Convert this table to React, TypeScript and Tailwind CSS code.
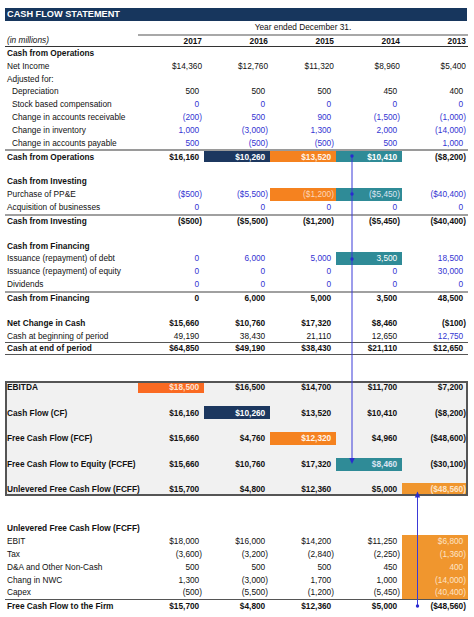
import clsx from "clsx"

type Cell = string | { v: string; bg: string; fg: string }

type Row = {
  label?: string
  values?: Cell[]
  bold?: boolean
  indent?: boolean
  blue?: boolean[]
  raw?: boolean
  line?: string
}

const NAVY = { bg: "bg-[#1c375f]", fg: "text-white" }
const ORANGE = { bg: "bg-[#f5821f]", fg: "text-[#fff3ea]" }
const ORANGE_SOFT = { bg: "bg-[#f5821f]", fg: "text-[#fcd6b8]" }
const TEAL = { bg: "bg-[#2f8b97]", fg: "text-white" }
const TEAL_SOFT = { bg: "bg-[#2f8b97]", fg: "text-[#d9e4f2]" }
const RED_ORANGE = { bg: "bg-[#fa6a22]", fg: "text-[#ffe3d2]" }
const AMBER = { bg: "bg-[#f0962e]", fg: "text-[#fde3c6]" }

const ALL = [true, true, true, true, true]
const LAST = [false, false, false, false, true]

const top: Row[] = [
  { label: "Cash from Operations", bold: true },
  { label: "Net Income", values: ["$14,360", "$12,760", "$11,320", "$8,960", "$5,400"], raw: true },
  { label: "Adjusted for:" },
  { label: "Depreciation", indent: true, values: ["500", "500", "500", "450", "400"] },
  { label: "Stock based compensation", indent: true, blue: ALL, values: ["0", "0", "0", "0", "0"] },
  { label: "Change in accounts receivable", indent: true, blue: ALL, values: ["(200)", "500", "900", "(1,500)", "(1,000)"] },
  { label: "Change in inventory", indent: true, blue: ALL, values: ["1,000", "(3,000)", "1,300", "2,000", "(14,000)"] },
  { label: "Change in accounts payable", indent: true, blue: ALL, values: ["500", "(500)", "(500)", "500", "1,000"] },
  {
    label: "Cash from Operations",
    bold: true,
    line: "border-t-2 border-[#9a9a9a]",
    values: [
      "$16,160",
      { v: "$10,260", ...NAVY },
      { v: "$13,520", ...ORANGE },
      { v: "$10,410", ...TEAL },
      "($8,200)",
    ],
  },
  {},
  { label: "Cash from Investing", bold: true },
  {
    label: "Purchase of PP&E",
    blue: ALL,
    values: ["($500)", "($5,500)", { v: "($1,200)", ...ORANGE_SOFT }, { v: "($5,450)", ...TEAL_SOFT }, "($40,400)"],
  },
  { label: "Acquisition of businesses", blue: ALL, values: ["0", "0", "0", "0", "0"] },
  {
    label: "Cash from Investing",
    bold: true,
    line: "border-t-2 border-[#a0a0a0]",
    values: ["($500)", "($5,500)", "($1,200)", "($5,450)", "($40,400)"],
  },
  {},
  { label: "Cash from Financing", bold: true },
  {
    label: "Issuance (repayment) of debt",
    blue: ALL,
    values: ["0", "6,000", "5,000", { v: "3,500", ...TEAL }, "18,500"],
  },
  { label: "Issuance (repayment) of equity", blue: ALL, values: ["0", "0", "0", "0", "30,000"] },
  { label: "Dividends", blue: ALL, values: ["0", "0", "0", "0", "0"] },
  {
    label: "Cash from Financing",
    bold: true,
    line: "border-t-2 border-[#a0a0a0]",
    values: ["0", "6,000", "5,000", "3,500", "48,500"],
  },
  {},
  { label: "Net Change in Cash", bold: true, values: ["$15,660", "$10,760", "$17,320", "$8,460", "($100)"] },
  { label: "Cash at beginning of period", blue: LAST, values: ["49,190", "38,430", "21,110", "12,650", "12,750"] },
  {
    label: "Cash at end of period",
    bold: true,
    line: "border-y border-[#555]",
    values: ["$64,850", "$49,190", "$38,430", "$21,110", "$12,650"],
  },
  {},
  {},
]

const box: Row[] = [
  { label: "EBITDA", bold: true, values: [{ v: "$18,500", ...RED_ORANGE }, "$16,500", "$14,700", "$11,700", "$7,200"] },
  {},
  { label: "Cash Flow (CF)", bold: true, values: ["$16,160", { v: "$10,260", ...NAVY }, "$13,520", "$10,410", "($8,200)"] },
  {},
  { label: "Free Cash Flow (FCF)", bold: true, values: ["$15,660", "$4,760", { v: "$12,320", ...ORANGE }, "$4,960", "($48,600)"] },
  {},
  {
    label: "Free Cash Flow to Equity (FCFE)",
    bold: true,
    values: ["$15,660", "$10,760", "$17,320", { v: "$8,460", ...TEAL_SOFT }, "($30,100)"],
  },
  {},
  {
    label: "Unlevered Free Cash Flow (FCFF)",
    bold: true,
    line: "pb-[1px]",
    values: ["$15,700", "$4,800", "$12,360", "$5,000", { v: "($48,560)", ...AMBER }],
  },
]

const bottom: Row[] = [
  {},
  {},
  { label: "Unlevered Free Cash Flow (FCFF)", bold: true },
  { label: "EBIT", values: ["$18,000", "$16,000", "$14,200", "$11,250", { v: "$6,800", ...AMBER }] },
  { label: "Tax", values: ["(3,600)", "(3,200)", "(2,840)", "(2,250)", { v: "(1,360)", ...AMBER }] },
  { label: "D&A and Other Non-Cash", values: ["500", "500", "500", "450", { v: "400", ...AMBER }] },
  { label: "Chang in NWC", values: ["1,300", "(3,000)", "1,700", "1,000", { v: "(14,000)", ...AMBER }] },
  { label: "Capex", values: ["(500)", "(5,500)", "(1,200)", "(5,450)", { v: "(40,400)", ...AMBER }] },
  {
    label: "Free Cash Flow to the Firm",
    bold: true,
    line: "border-t border-[#555]",
    values: ["$15,700", "$4,800", "$12,360", "$5,000", "($48,560)"],
  },
]

const GRID = "grid grid-cols-[133px_66px_66px_66px_66px_66px] h-[12.857px]"

function Value({ cell, blue, raw }: { cell: Cell; blue?: boolean; raw?: boolean }) {
  const c = typeof cell === "string" ? { v: cell, bg: "", fg: "" } : cell
  const paren = c.v.endsWith(")")
  return (
    <div
      className={clsx(
        "flex h-full items-center justify-end pr-[2px] whitespace-nowrap",
        c.bg,
        c.fg || (blue ? "text-[#3434d2]" : "")
      )}
    >
      {c.v}
      {!paren && !raw && <span className="invisible">)</span>}
    </div>
  )
}

function Line({ row }: { row: Row }) {
  return (
    <div className={clsx(GRID, row.line, row.bold && "font-bold")}>
      <div
        className={clsx(
          "flex h-full items-center whitespace-nowrap",
          row.indent ? "pl-[7px]" : "pl-[2px]"
        )}
      >
        {row.label}
      </div>
      {row.values?.map((cell, i) => (
        <Value key={i} cell={cell} blue={row.blue?.[i]} raw={row.raw} />
      ))}
    </div>
  )
}

function Arrows() {
  return (
    <svg
      className="pointer-events-none absolute left-0 top-0"
      width={474}
      height={617}
      viewBox="0 0 474 617"
    >
      <g stroke="#3a3ad8" strokeWidth={1} fill="#2a2ad0">
        {/* operations -> FCFE */}
        <line x1={352} y1={156} x2={352} y2={459} />
        <circle cx={352} cy={156} r={1.7} stroke="none" />
        <circle cx={352} cy={194} r={1.7} stroke="none" />
        <circle cx={352} cy={259} r={1.7} stroke="none" />
        <polygon points="349.3,458 354.7,458 352,464" stroke="none" />

        {/* FCFF build-up -> FCFF */}
        <line x1={417.5} y1={497} x2={417.5} y2={606} />
        <circle cx={417.5} cy={606} r={1.7} stroke="none" />
        <polygon points="414.8,497.5 420.2,497.5 417.5,491.5" stroke="none" />
      </g>
    </svg>
  )
}

export default function App() {
  const years = ["2017", "2016", "2015", "2014", "2013"]

  return (
    <div className="relative h-[617px] w-[474px] overflow-hidden bg-white font-['Liberation_Sans',Arial,sans-serif] text-[8.3px] leading-none text-[#111]">
      <div className="ml-[5px] mt-[8px] w-[463px]">
        {/* ---------------- TITLE ---------------- */}
        <div className="flex h-[13px] w-[462px] items-center bg-[#17365d] pl-[2px] text-[9.2px] font-bold text-white">
          CASH FLOW STATEMENT
        </div>

        {/* ---------------- HEADER ---------------- */}
        <div className={GRID}>
          <div />
          <div className="col-span-5 flex items-center justify-center pb-[1px]">
            Year ended December 31.
          </div>
        </div>
        <div className={clsx(GRID, "border-b border-[#333]")}>
          <div className="flex h-full items-center pl-[2px] italic">(in millions)</div>
          {years.map((y) => (
            <div
              key={y}
              className="flex h-full items-center justify-end border-t-2 border-[#a8a8a8] pr-[2px] font-bold"
            >
              {y}
            </div>
          ))}
        </div>

        {top.map((row, i) => (
          <Line key={i} row={row} />
        ))}

        {/* ---------------- SUMMARY BOX ---------------- */}
        <div className="bg-[#f1f1f1] outline-2 outline-[#555] -outline-offset-2">
          {box.map((row, i) => (
            <Line key={i} row={row} />
          ))}
        </div>

        {bottom.map((row, i) => (
          <Line key={i} row={row} />
        ))}
      </div>

      <Arrows />
    </div>
  )
}
